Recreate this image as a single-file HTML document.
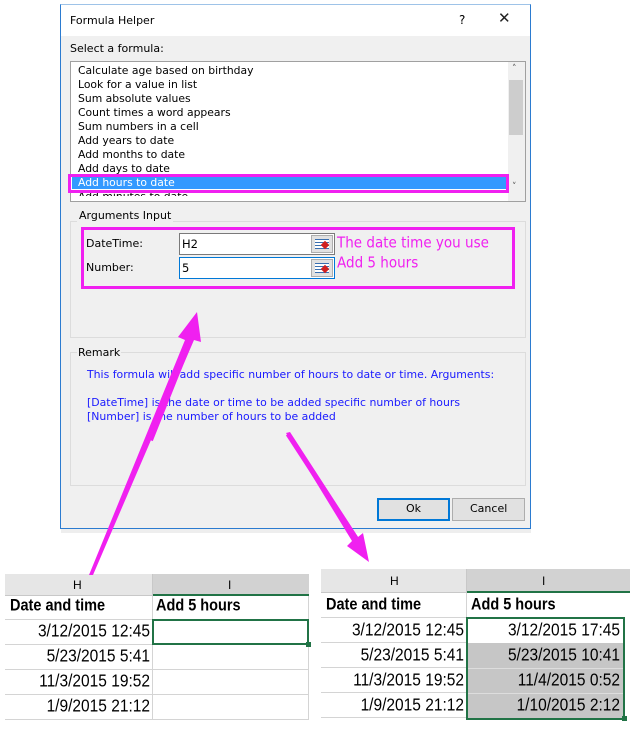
<!DOCTYPE html>
<html><head><style>
*{margin:0;padding:0;box-sizing:border-box}
body{width:630px;height:731px;background:#fff;position:relative;overflow:hidden;font-family:"DejaVu Sans","Liberation Sans",sans-serif}
.a{position:absolute}
.t{font-size:10.8px;color:#000;white-space:nowrap;line-height:14px}
.s{font-family:"Liberation Sans",sans-serif;font-size:15.5px;white-space:nowrap;transform:scaleY(1.12);transform-origin:0 50%}
.grp{border:1px solid #dcdcdc}
.cell{position:absolute;border-right:1px solid #d4d4d4;border-bottom:1px solid #d4d4d4}
</style></head><body>
<!-- dialog -->
<div class="a" style="left:60px;top:4px;width:471px;height:525px;background:#f0f0f0;border:1px solid #2b7bd0;border-top-color:#9ec3e8"></div>
<div class="a" style="left:61px;top:5px;width:469px;height:31px;background:#fff"></div>
<div class="a t" style="left:70px;top:14px;font-size:11px">Formula Helper</div>
<div class="a t" style="left:459px;top:13px;font-size:12px">?</div>
<div class="a" style="left:498px;top:9px;font-size:15px;font-family:'DejaVu Sans';color:#222">✕</div>
<div class="a t" style="left:70px;top:42px;font-size:11px">Select a formula:</div>
<div class="a" style="left:70px;top:61px;width:456px;height:141px;background:#fff;border:1px solid #a0a0a0"></div>
<div class="a" style="left:508px;top:62px;width:17px;height:139px;background:#f0f0f0"></div>
<div class="a" style="left:509px;top:80px;width:14px;height:55px;background:#cdcdcd"></div>
<div class="a" style="left:512px;top:64px;font-size:9px;color:#555">˄</div>
<div class="a" style="left:512px;top:182px;font-size:9px;color:#555">˅</div>
<div class="a" style="left:72px;top:176px;width:435px;height:13px;background:#3399ff"></div>
<div class="a t" style="left:78px;top:64px;line-height:14px">Calculate age based on birthday<br>Look for a value in list<br>Sum absolute values<br>Count times a word appears<br>Sum numbers in a cell<br>Add years to date<br>Add months to date<br>Add days to date<br><span style="color:#fff">Add hours to date</span><br>Add minutes to date</div>
<div class="a" style="left:71px;top:196px;width:436px;height:5px;background:#fff"></div>
<div class="a" style="left:68px;top:174px;width:441px;height:19px;border:3px solid #f020f0"></div>
<!-- arguments -->
<div class="a grp" style="left:70px;top:221px;width:456px;height:117px"></div>
<div class="a t" style="left:77px;top:209px;background:#f0f0f0;padding:0 2px;font-size:11px">Arguments Input</div>
<div class="a" style="left:81px;top:227px;width:434px;height:62px;border:3px solid #f020f0"></div>
<div class="a t" style="left:86px;top:237px;font-size:11px">DateTime:</div>
<div class="a t" style="left:86px;top:261px;font-size:11px">Number:</div>
<div class="a" style="left:179px;top:233px;width:156px;height:22px;background:#fff;border:1px solid #7a7a7a"></div>
<div class="a" style="left:179px;top:257px;width:156px;height:22px;background:#fff;border:1px solid #0078d7"></div>
<div class="a t" style="left:182px;top:237px;font-size:11.5px">H2</div>
<div class="a t" style="left:182px;top:261px;font-size:11.5px">5</div>
<div class="a" style="left:311px;top:235px;width:22px;height:18px;background:#e1e1e1;border:1px solid #adadad"></div>
<div class="a" style="left:311px;top:259px;width:22px;height:18px;background:#e1e1e1;border:1px solid #adadad"></div>
<div class="a" style="left:315px;top:239px;width:14px;height:10px;background:repeating-linear-gradient(#3a6fb0 0 1px,#fff 1px 3px)"></div>
<div class="a" style="left:315px;top:263px;width:14px;height:10px;background:repeating-linear-gradient(#3a6fb0 0 1px,#fff 1px 3px)"></div>
<div class="a" style="left:322px;top:242px;width:6px;height:6px;background:#d02020;transform:rotate(45deg)"></div>
<div class="a" style="left:322px;top:266px;width:6px;height:6px;background:#d02020;transform:rotate(45deg)"></div>
<div class="a" style="left:337px;top:235px;color:#f020f0;font-size:13.5px;font-family:'DejaVu Sans';white-space:nowrap;transform:scaleY(1.1)">The date time you use</div>
<div class="a" style="left:337px;top:255px;color:#f020f0;font-size:13.5px;font-family:'DejaVu Sans';white-space:nowrap;transform:scaleY(1.1)">Add 5 hours</div>
<!-- remark -->
<div class="a grp" style="left:70px;top:352px;width:456px;height:134px"></div>
<div class="a t" style="left:77px;top:346px;background:#f0f0f0;padding:0 1px;font-size:11px">Remark</div>
<div class="a t" style="left:87px;top:368px;color:#1a1aff;font-size:10.9px">This formula will add specific number of hours to date or time. Arguments:</div>
<div class="a t" style="left:87px;top:396px;color:#1a1aff;font-size:10.9px">[DateTime] is the date or time to be added specific number of hours<br>[Number] is the number of hours to be added</div>
<div class="a" style="left:377px;top:498px;width:73px;height:23px;background:#e1e1e1;border:2px solid #0078d7"></div>
<div class="a t" style="left:406px;top:502px;font-size:11px">Ok</div>
<div class="a" style="left:452px;top:498px;width:73px;height:23px;background:#e1e1e1;border:1px solid #adadad"></div>
<div class="a t" style="left:470px;top:502px;font-size:11px">Cancel</div>
<div class="a" style="left:61px;top:529px;width:470px;height:4px;background:#eee"></div>

<!-- left sheet -->
<div class="a" style="left:5px;top:574px;width:148px;height:22px;background:#e6e6e6;border-right:1px solid #c8c8c8;border-bottom:1px solid #c8c8c8"></div>
<div class="a" style="left:153px;top:574px;width:156px;height:22px;background:#d2d2d2;border-bottom:2px solid #217346"></div>
<div class="a" style="left:73px;top:578px;font-size:12px;font-family:'Liberation Sans'">H</div>
<div class="a" style="left:228px;top:578px;font-size:12px;font-family:'Liberation Sans'">I</div>
<div class="cell" style="left:5px;top:596px;width:148px;height:24px"></div><div class="cell" style="left:153px;top:596px;width:156px;height:24px"></div>
<div class="cell" style="left:5px;top:620px;width:148px;height:25px"></div><div class="cell" style="left:153px;top:620px;width:156px;height:25px"></div>
<div class="cell" style="left:5px;top:645px;width:148px;height:25px"></div><div class="cell" style="left:153px;top:645px;width:156px;height:25px"></div>
<div class="cell" style="left:5px;top:670px;width:148px;height:25px"></div><div class="cell" style="left:153px;top:670px;width:156px;height:25px"></div>
<div class="cell" style="left:5px;top:695px;width:148px;height:25px"></div><div class="cell" style="left:153px;top:695px;width:156px;height:25px"></div>
<div class="a" style="left:152px;top:619px;width:157px;height:26px;border:2px solid #217346"></div>
<div class="a" style="left:306px;top:642px;width:5px;height:5px;background:#217346"></div>
<div class="a s" style="left:10px;top:598px;font-weight:bold;font-size:14.5px">Date and time</div>
<div class="a s" style="left:156px;top:598px;font-weight:bold;font-size:14.5px">Add 5 hours</div>
<div class="a s" style="left:150px;top:623px;transform:translateX(-100%) scaleY(1.12)">3/12/2015 12:45</div>
<div class="a s" style="left:150px;top:648px;transform:translateX(-100%) scaleY(1.12)">5/23/2015 5:41</div>
<div class="a s" style="left:150px;top:673px;transform:translateX(-100%) scaleY(1.12)">11/3/2015 19:52</div>
<div class="a s" style="left:150px;top:698px;transform:translateX(-100%) scaleY(1.12)">1/9/2015 21:12</div>

<!-- right sheet -->
<div class="a" style="left:321px;top:569px;width:146px;height:24px;background:#e6e6e6;border-right:1px solid #c8c8c8;border-bottom:1px solid #c8c8c8"></div>
<div class="a" style="left:467px;top:569px;width:163px;height:24px;background:#d2d2d2;border-bottom:2px solid #217346"></div>
<div class="a" style="left:390px;top:574px;font-size:12px;font-family:'Liberation Sans'">H</div>
<div class="a" style="left:542px;top:574px;font-size:12px;font-family:'Liberation Sans'">I</div>
<div class="cell" style="left:321px;top:593px;width:146px;height:25px"></div>
<div class="cell" style="left:321px;top:618px;width:146px;height:25px"></div>
<div class="cell" style="left:321px;top:643px;width:146px;height:25px"></div>
<div class="cell" style="left:321px;top:668px;width:146px;height:25px"></div>
<div class="cell" style="left:321px;top:693px;width:146px;height:25px"></div>
<div class="a" style="left:468px;top:643px;width:156px;height:75px;background:#c6c6c6"></div>
<div class="a" style="left:468px;top:668px;width:156px;height:1px;background:#ddd"></div>
<div class="a" style="left:468px;top:693px;width:156px;height:1px;background:#ddd"></div>
<div class="a" style="left:466px;top:617px;width:159px;height:103px;border:2px solid #217346"></div>
<div class="a" style="left:622px;top:716px;width:5px;height:5px;background:#217346"></div>
<div class="a s" style="left:326px;top:597px;font-weight:bold;font-size:14.5px">Date and time</div>
<div class="a s" style="left:471px;top:597px;font-weight:bold;font-size:14.5px">Add 5 hours</div>
<div class="a s" style="left:464px;top:622px;transform:translateX(-100%) scaleY(1.12)">3/12/2015 12:45</div>
<div class="a s" style="left:464px;top:647px;transform:translateX(-100%) scaleY(1.12)">5/23/2015 5:41</div>
<div class="a s" style="left:464px;top:672px;transform:translateX(-100%) scaleY(1.12)">11/3/2015 19:52</div>
<div class="a s" style="left:464px;top:697px;transform:translateX(-100%) scaleY(1.12)">1/9/2015 21:12</div>
<div class="a s" style="left:620px;top:622px;transform:translateX(-100%) scaleY(1.12)">3/12/2015 17:45</div>
<div class="a s" style="left:620px;top:647px;transform:translateX(-100%) scaleY(1.12)">5/23/2015 10:41</div>
<div class="a s" style="left:620px;top:672px;transform:translateX(-100%) scaleY(1.12)">11/4/2015 0:52</div>
<div class="a s" style="left:620px;top:697px;transform:translateX(-100%) scaleY(1.12)">1/10/2015 2:12</div>

<!-- arrows -->
<svg class="a" style="left:0;top:0" width="630" height="731">
<polygon points="89,575 185,340 178,337 197,312 201,342 194,340 93,575" fill="#f020f0"/>
<polygon points="286,433 290,432 358,537 363,533 369,562 347,546 352,541" fill="#f020f0"/>
<line x1="288" y1="434" x2="357" y2="540" stroke="#f020f0" stroke-width="5"/>
<line x1="150" y1="440" x2="192" y2="335" stroke="#f020f0" stroke-width="6"/>
</svg>
</body></html>
